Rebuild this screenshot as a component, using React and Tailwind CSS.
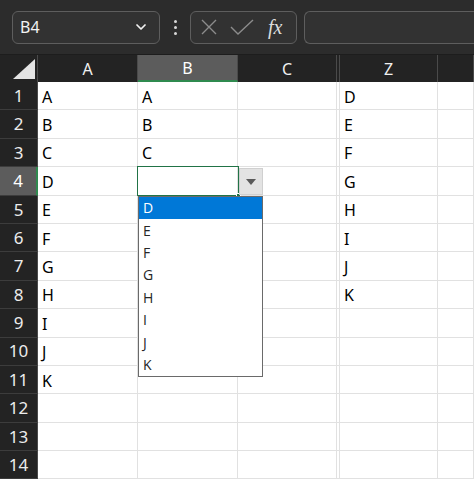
import React from "react";
import { ChevronDown } from "lucide-react";

const COLS = [
  { key: "A", w: "w-[100px]" },
  { key: "B", w: "w-[100px]" },
  { key: "C", w: "w-[99px]" },
  { key: "gap", w: "w-[3px]" },
  { key: "Z", w: "w-[98px]" },
  { key: "next", w: "flex-1" },
];

const colA = ["A", "B", "C", "D", "E", "F", "G", "H", "I", "J", "K"];
const colB = ["A", "B", "C"];
const colZ = ["D", "E", "F", "G", "H", "I", "J", "K"];
const listItems = ["D", "E", "F", "G", "H", "I", "J", "K"];

const cellFont = { fontFamily: '"Noto Sans", "Open Sans", sans-serif' };

const Toolbar = () => (
  <div className="h-[55px] bg-[#2c2c2c] flex items-center pl-[12px] border-b border-[#1d1d1d]">
    <div className="w-[148px] h-[33px] rounded-md border border-[#5e5e5e] bg-[#323232] flex items-center justify-between pl-[7px] pr-[10px]">
      <span className="text-[16px] text-[#f2f2f2]" style={cellFont}>B4</span>
      <ChevronDown size={16} strokeWidth={2.6} className="text-[#f2f2f2]" />
    </div>
    <div className="w-[30px] flex flex-col items-center gap-[3px]">
      <span className="w-[3px] h-[3px] rounded-full bg-[#d8d8d8]" />
      <span className="w-[3px] h-[3px] rounded-full bg-[#d8d8d8]" />
      <span className="w-[3px] h-[3px] rounded-full bg-[#d8d8d8]" />
    </div>
    <div className="w-[107px] h-[33px] rounded-md border border-[#5e5e5e] bg-[#323232] flex items-center pl-[8px]">
      <svg width="20" height="20" viewBox="0 0 20 20" className="text-[#8c8c8c]">
        <path d="M3 3 L17 17 M17 3 L3 17" stroke="currentColor" strokeWidth="1.4" fill="none" />
      </svg>
      <svg width="26" height="20" viewBox="0 0 26 20" className="ml-[10px] text-[#8c8c8c]">
        <path d="M2 10 L9 17 L24 3" stroke="currentColor" strokeWidth="1.4" fill="none" />
      </svg>
      <span
        className="ml-[13px] text-[20px] italic text-[#dcdcdc] leading-none"
        style={{ fontFamily: '"Liberation Serif", "DejaVu Serif", serif' }}
      >
        fx
      </span>
    </div>
    <div className="ml-[7px] flex-1 h-[33px] rounded-l-md border border-r-0 border-[#5e5e5e] bg-[#323232]" />
  </div>
);

const HeaderRow = () => (
  <div className="h-[27px] flex bg-[#232323]">
    <div className="w-[38px] relative border-r border-[#4a4a4a]">
      <svg width="22" height="20" viewBox="0 0 22 20" className="absolute right-[2px] bottom-[3px]">
        <path d="M22 0 L22 20 L0 20 Z" fill="#e4e4e4" />
      </svg>
    </div>
    {COLS.map((c) => {
      if (c.key === "gap")
        return <div key={c.key} className={`${c.w} border-r border-[#4a4a4a]`} />;
      const sel = c.key === "B";
      return (
        <div
          key={c.key}
          className={`${c.w} flex items-center justify-center text-[16px] border-r border-[#4a4a4a] ${
            sel ? "bg-[#5c5c5c] border-b-2 border-b-[#2f8a4f] text-white" : "text-[#f0f0f0]"
          }`}
          style={cellFont}
        >
          {c.key === "next" ? "" : c.key}
        </div>
      );
    })}
  </div>
);

const Row = ({ n }) => {
  const sel = n === 4;
  const vals = {
    A: colA[n - 1] || "",
    B: colB[n - 1] || "",
    C: "",
    Z: colZ[n - 1] || "",
  };
  return (
    <div className="h-[28.4px] flex">
      <div
        className={`w-[38px] flex items-center justify-center text-[17px] border-b border-[#3c3c3c] ${
          sel ? "bg-[#5c5c5c] text-white border-r-2 border-r-[#2f8a4f]" : "bg-[#232323] text-[#ececec] border-r border-r-[#4a4a4a]"
        }`}
        style={cellFont}
      >
        {n}
      </div>
      {COLS.map((c) => {
        if (c.key === "gap") return <div key={c.key} className={`${c.w} border-r border-b border-[#e1e1e1]`} />;
        return (
          <div
            key={c.key}
            className={`${c.w} flex items-center pl-[4px] pt-[2px] text-[16px] text-black border-r border-b border-[#e1e1e1]`}
            style={cellFont}
          >
            {vals[c.key] || ""}
          </div>
        );
      })}
    </div>
  );
};

const DropdownOverlay = () => (
  <>
    {/* selected cell B4 */}
    <div className="absolute left-[137px] top-[84.2px] w-[102px] h-[29.4px] border border-[#217346]">
      <div className="absolute right-[-3px] bottom-[-3px] w-[5px] h-[5px] bg-[#217346] border border-white" />
    </div>
    {/* dropdown arrow button */}
    <div className="absolute left-[239px] top-[86px] w-[24px] h-[27px] bg-[#e3e3e3] border border-[#d0d0d0] flex items-center justify-center">
      <svg width="10" height="6" viewBox="0 0 10 6">
        <path d="M0 0 L10 0 L5 6 Z" fill="#5a5a5a" />
      </svg>
    </div>
    {/* list */}
    <div className="absolute left-[138px] top-[113.6px] w-[125px] h-[181px] bg-white border border-[#6a6a6a] flex flex-col">
      {listItems.map((it, i) => (
        <div
          key={it}
          className={`h-[22.4px] flex items-center pl-[4px] text-[14px] ${
            i === 0 ? "bg-[#0078d7] text-white" : "text-[#262626]"
          }`}
          style={{ fontFamily: '"Open Sans", "Noto Sans", sans-serif' }}
        >
          {it}
        </div>
      ))}
    </div>
  </>
);

export default function App() {
  return (
    <div className="w-[474px] h-[481px] overflow-hidden bg-white">
      <Toolbar />
      <HeaderRow />
      <div className="relative">
        {Array.from({ length: 14 }, (_, i) => (
          <Row key={i} n={i + 1} />
        ))}
        <DropdownOverlay />
      </div>
    </div>
  );
}
